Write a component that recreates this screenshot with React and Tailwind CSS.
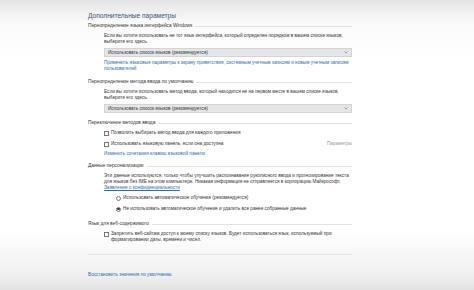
import React from 'react';

const font = { fontFamily: '"Liberation Sans", "Noto Sans", sans-serif' };

function Section({ title, children }) {
  return (
    <div>
      <div className="flex items-center gap-[3px] h-[6px]">
        <span className="text-[4.8px] leading-[6px] text-[#333] whitespace-nowrap">{title}</span>
        <div className="flex-1 h-px bg-[#e3e3e3]" />
      </div>
      <div className="pl-[16px]">{children}</div>
    </div>
  );
}

function Select() {
  return (
    <div className="h-[9px] bg-[#e6e6e6] border border-[#d4d4d4] flex items-center justify-between pl-[3px] pr-[3px]">
      <span className="text-[4.7px] leading-[6px] text-[#333]">Использовать список языков (рекомендуется)</span>
      <svg width="4" height="3" viewBox="0 0 4 3">
        <path d="M0.5 0.5 L2 2 L3.5 0.5" fill="none" stroke="#777" strokeWidth="0.7" />
      </svg>
    </div>
  );
}

function Check({ children }) {
  return (
    <div className="flex items-start gap-[2px]">
      <div className="mt-[0.5px] w-[5px] h-[5px] border border-[#777] bg-white shrink-0" />
      <div className="text-[4.7px] leading-[6px] text-[#333]">{children}</div>
    </div>
  );
}

function Radio({ checked, children }) {
  return (
    <div className="flex items-center gap-[2px] pl-[12px]">
      <div className="w-[5px] h-[5px] rounded-full border border-[#777] bg-white flex items-center justify-center shrink-0">
        {checked && <div className="w-[2.5px] h-[2.5px] rounded-full bg-[#333]" />}
      </div>
      <div className="text-[4.7px] leading-[6px] text-[#333] whitespace-nowrap">{children}</div>
    </div>
  );
}

const text = 'text-[4.7px] leading-[6px] text-[#333]';
const link = 'text-[4.7px] leading-[6px] text-[#2c6cb4]';

export default function App() {
  return (
    <div
      className="w-[474px] h-[290px] overflow-hidden bg-[linear-gradient(to_bottom,#e4e4e4_0px,#fafafa_22px,#ffffff_60px,#ffffff_230px,#f0f0f0_275px,#e2e2e2_290px)]"
      style={font}
    >
      <div className="pl-[88px] w-[352px] pt-[12px]">
        <div className="text-[6.6px] leading-[8px] text-[#3c5370]">Дополнительные параметры</div>

        <div className="mt-[3px]">
          <Section title="Переопределение языка интерфейса Windows">
            <div className={`${text} mt-[4px]`}>
              Если вы хотите использовать не тот язык интерфейса, который определен порядком в вашем списке языков,
              <br />выберите его здесь.
            </div>
            <div className="mt-[3px]"><Select /></div>
            <div className={`${link} mt-[3px]`}>
              Применить языковые параметры к экрану приветствия, системным учетным записям и новым учетным записям
              <br />пользователей
            </div>
          </Section>
        </div>

        <div className="mt-[7px]">
          <Section title="Переопределение метода ввода по умолчанию">
            <div className={`${text} mt-[4px]`}>
              Если вы хотите использовать метод ввода, который находится не на первом месте в вашем списке языков,
              <br />выберите его здесь.
            </div>
            <div className="mt-[3px]"><Select /></div>
          </Section>
        </div>

        <div className="mt-[7px]">
          <Section title="Переключение методов ввода">
            <div className="mt-[4px]">
              <Check>Позволить выбирать метод ввода для каждого приложения</Check>
            </div>
            <div className="mt-[5px] flex items-start justify-between">
              <Check>Использовать языковую панель, если она доступна</Check>
              <span className="text-[4.7px] leading-[6px] text-[#999]">Параметры</span>
            </div>
            <div className={`${link} mt-[4px]`}>Изменить сочетания клавиш языковой панели</div>
          </Section>
        </div>

        <div className="mt-[6px]">
          <Section title="Данные персонализации">
            <div className={`${text} mt-[4px]`}>
              Эти данные используются, только чтобы улучшить распознавание рукописного ввода и прогнозирование текста
              <br />для языков без IME на этом компьютере. Никакая информация не отправляется в корпорацию Майкрософт.
            </div>
            <div className={`${link} underline`}>Заявление о конфиденциальности</div>
            <div className="mt-[4px]">
              <Radio>Использовать автоматическое обучение (рекомендуется)</Radio>
            </div>
            <div className="mt-[5px]">
              <Radio checked>Не использовать автоматическое обучение и удалить все ранее собранные данные</Radio>
            </div>
          </Section>
        </div>

        <div className="mt-[9px]">
          <Section title="Язык для веб-содержимого">
            <div className="mt-[4px]">
              <Check>
                Запретить веб-сайтам доступ к моему списку языков. Будет использоваться язык, используемый при
                <br />форматировании даты, времени и чисел.
              </Check>
            </div>
          </Section>
        </div>

        <div className="mt-[11px] h-px bg-[#e3e3e3]" />
        <div className={`${link} mt-[17px]`}>Восстановить значения по умолчанию</div>
      </div>
    </div>
  );
}
